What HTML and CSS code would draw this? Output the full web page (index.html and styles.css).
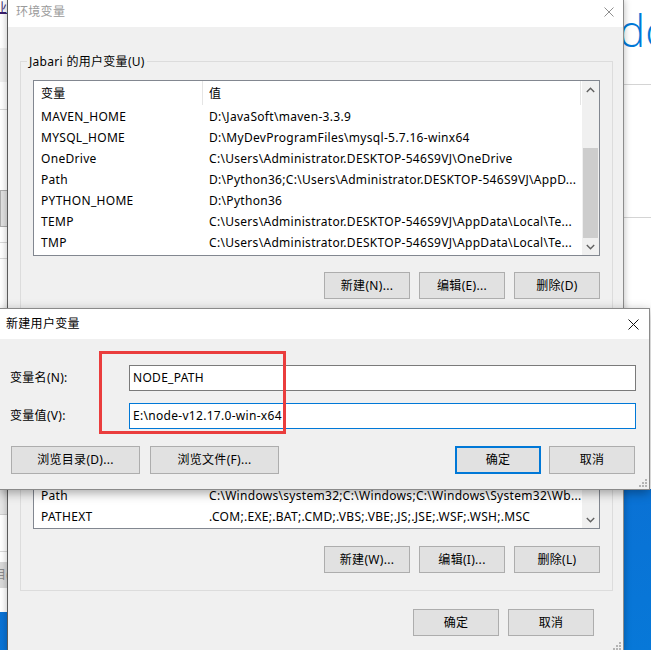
FILE: index.html
```html
<!DOCTYPE html>
<html lang="zh-CN">
<head>
<meta charset="utf-8">
<title>环境变量</title>
<link rel="stylesheet" href="styles.css">
</head>
<body>
<div class="desktop">
  <div class="wallpaper"></div>

  <div class="bg-left">
    <div class="bgl-link"><span>业</span></div>
    <div class="bgl-space h32"></div>
    <div class="bgl-band"></div>
    <div class="bgl-space h28 line"></div>
    <div class="bgl-space h79"></div>
    <div class="bgl-btn"></div>
    <div class="bgl-space h15 line"></div>
    <div class="bgl-space h16 line"></div>
    <div class="bgl-space h231"></div>
    <div class="bgl-gray"></div>
    <div class="bgl-space h37 line"></div>
    <div class="bgl-space h10"></div>
    <div class="bgl-tab"><span>目(</span></div>
  </div>

  <div class="bg-right">
    <div class="bgr-logo">do</div>
    <div class="bgr-block"></div>
  </div>

  <section class="dlg env">
    <header class="titlebar env-title">
      <span class="title">环境变量</span>
      <svg class="close" width="10" height="10" viewBox="0 0 10 10"><path d="M0.5 0.5L9.5 9.5M9.5 0.5L0.5 9.5"/></svg>
    </header>
    <div class="env-body">
      <fieldset class="group">
        <legend>Jabari 的用户变量(U)</legend>
        <div class="listview">
          <div class="lv-main">
            <div class="lv-head"><span class="hc1">变量</span><span class="hc2">值</span></div>
            <div class="lv-rows top">
              <div class="lv-row"><span class="c1">MAVEN_HOME</span><span class="c2">D:\JavaSoft\maven-3.3.9</span></div>
              <div class="lv-row"><span class="c1">MYSQL_HOME</span><span class="c2">D:\MyDevProgramFiles\mysql-5.7.16-winx64</span></div>
              <div class="lv-row"><span class="c1">OneDrive</span><span class="c2">C:\Users\Administrator.DESKTOP-546S9VJ\OneDrive</span></div>
              <div class="lv-row"><span class="c1">Path</span><span class="c2">D:\Python36;C:\Users\Administrator.DESKTOP-546S9VJ\AppD...</span></div>
              <div class="lv-row"><span class="c1">PYTHON_HOME</span><span class="c2">D:\Python36</span></div>
              <div class="lv-row"><span class="c1">TEMP</span><span class="c2">C:\Users\Administrator.DESKTOP-546S9VJ\AppData\Local\Te...</span></div>
              <div class="lv-row"><span class="c1">TMP</span><span class="c2">C:\Users\Administrator.DESKTOP-546S9VJ\AppData\Local\Te...</span></div>
            </div>
          </div>
          <div class="vscroll">
            <div class="sb-arrow"><svg width="9" height="6" viewBox="0 0 9 6"><path d="M0.8 5L4.5 1.3L8.2 5"/></svg></div>
            <div class="sb-track"><div class="sb-thumb user-thumb"></div></div>
            <div class="sb-arrow"><svg width="9" height="6" viewBox="0 0 9 6"><path d="M0.8 1L4.5 4.7L8.2 1"/></svg></div>
          </div>
        </div>
        <div class="btn-row">
          <button class="btn">新建(N)...</button>
          <button class="btn">编辑(E)...</button>
          <button class="btn">删除(D)</button>
        </div>
      </fieldset>

      <fieldset class="group sys">
        <legend>系统变量(S)</legend>
        <div class="listview sys-list">
          <div class="lv-main">
            <div class="lv-head"><span class="hc1">变量</span><span class="hc2">值</span></div>
            <div class="lv-rows bottom">
              <div class="lv-row"><span class="c1">NUMBER_OF_PROCESSORS</span><span class="c2">4</span></div>
              <div class="lv-row"><span class="c1">OS</span><span class="c2">Windows_NT</span></div>
              <div class="lv-row"><span class="c1">Path</span><span class="c2">C:\Windows\system32;C:\Windows;C:\Windows\System32\Wb...</span></div>
              <div class="lv-row"><span class="c1">PATHEXT</span><span class="c2">.COM;.EXE;.BAT;.CMD;.VBS;.VBE;.JS;.JSE;.WSF;.WSH;.MSC</span></div>
            </div>
          </div>
          <div class="vscroll">
            <div class="sb-arrow"><svg width="9" height="6" viewBox="0 0 9 6"><path d="M0.8 5L4.5 1.3L8.2 5"/></svg></div>
            <div class="sb-track"><div class="sb-thumb sys-thumb"></div></div>
            <div class="sb-arrow"><svg width="9" height="6" viewBox="0 0 9 6"><path d="M0.8 1L4.5 4.7L8.2 1"/></svg></div>
          </div>
        </div>
        <div class="btn-row">
          <button class="btn">新建(W)...</button>
          <button class="btn">编辑(I)...</button>
          <button class="btn">删除(L)</button>
        </div>
      </fieldset>

      <div class="dlg-btns">
        <button class="btn">确定</button>
        <button class="btn">取消</button>
      </div>
    </div>
    <svg class="grip" width="8" height="8" viewBox="0 0 8 8"><rect x="6" y="0" width="2" height="2"/><rect x="3" y="3" width="2" height="2"/><rect x="6" y="3" width="2" height="2"/><rect x="0" y="6" width="2" height="2"/><rect x="3" y="6" width="2" height="2"/><rect x="6" y="6" width="2" height="2"/></svg>
  </section>

  <section class="dlg newvar">
    <header class="titlebar new-title">
      <span class="title">新建用户变量</span>
      <svg class="close" width="11" height="11" viewBox="0 0 11 11"><path d="M0.5 0.5L10.5 10.5M10.5 0.5L0.5 10.5"/></svg>
    </header>
    <div class="new-body">
      <div class="field-row">
        <span class="label">变量名(N):</span>
        <div class="field">NODE_PATH</div>
      </div>
      <div class="field-row second">
        <span class="label">变量值(V):</span>
        <div class="field focus"><span>E:\node-v12.17.0-win-x64</span><span class="caret"></span></div>
      </div>
      <div class="new-btns">
        <div class="left-btns">
          <button class="btn wide">浏览目录(D)...</button>
          <button class="btn wide">浏览文件(F)...</button>
        </div>
        <div class="right-btns">
          <button class="btn default">确定</button>
          <button class="btn">取消</button>
        </div>
      </div>
    </div>
    <svg class="grip" width="8" height="8" viewBox="0 0 8 8"><rect x="6" y="0" width="2" height="2"/><rect x="3" y="3" width="2" height="2"/><rect x="6" y="3" width="2" height="2"/><rect x="0" y="6" width="2" height="2"/><rect x="3" y="6" width="2" height="2"/><rect x="6" y="6" width="2" height="2"/></svg>
  </section>

  <div class="annotation"></div>
</div>
</body>
</html>
```

FILE: styles.css
```css
* { box-sizing: border-box; }
html, body { margin: 0; padding: 0; }
body {
  width: 651px;
  height: 650px;
  overflow: hidden;
  font-family: "Noto Sans", "Noto Sans CJK SC", sans-serif;
  font-size: 12px;
  line-height: 16px;
  letter-spacing: 0.3px;
  color: #000;
  background: #fff;
}
.desktop {
  position: relative;
  width: 651px;
  height: 650px;
  overflow: hidden;
  background: #fff;
}

/* wallpaper */
.wallpaper {
  position: absolute;
  left: 0;
  top: 470px;
  width: 651px;
  height: 180px;
  background: linear-gradient(170deg, #0a5cc2 0%, #0d66cc 14%, #2a8ae6 22%, #0b70d4 30%, #0778d8 100%);
}

/* background window on the left */
.bg-left {
  position: absolute;
  left: 0;
  top: 0;
  width: 30px;
  height: 612px;
  background: #fff;
  display: flex;
  flex-direction: column;
}
.bgl-link { height: 16px; overflow: hidden; }
.bgl-link span {
  display: block;
  margin-left: -6px;
  font-size: 13px;
  line-height: 15px;
  color: #3b1f6e;
  text-decoration: underline;
}
.bgl-space { flex: none; }
.h10 { height: 10px; }
.h15 { height: 16px; }
.h16 { height: 16px; }
.h28 { height: 28px; }
.h32 { height: 32px; }
.h37 { height: 37px; }
.h79 { height: 80px; }
.h231 { height: 216px; }
.line { border-bottom: 1px solid #d9d9d9; }
.bgl-band { height: 34px; background: #f0f0f0; }
.bgl-btn { height: 37px; background: #e1e1e1; border: 1px solid #adadad; }
.bgl-gray { height: 40px; background: #e6e6e6; border-bottom: 1px solid #cfcfcf; }
.bgl-tab {
  height: 26px;
  background: #d9d9d9;
  color: #8a8a8a;
  overflow: hidden;
  line-height: 26px;
}
.bgl-tab span { display: block; margin-left: -6px; }

/* background window on the right */
.bg-right {
  position: absolute;
  left: 600px;
  top: 0;
  width: 51px;
  height: 489px;
  background: #fff;
}
.bgr-logo {
  height: 85px;
  border-bottom: 1px solid #d4d4d4;
  padding: 5px 0 0 19px;
  font-family: "Open Sans", "Noto Sans", sans-serif;
  font-weight: 300;
  font-size: 44px;
  line-height: 50px;
  letter-spacing: 0;
  color: #0078d7;
  white-space: nowrap;
  overflow: hidden;
}
.bgr-block { height: 133px; border-bottom: 1px solid #d4d4d4; }

/* dialogs */
.dlg { position: absolute; background: #f0f0f0; }
.titlebar {
  display: flex;
  justify-content: space-between;
  background: #fff;
}
.close path { stroke-width: 1; fill: none; }
.grip { position: absolute; right: 2px; bottom: 2px; }
.grip rect { fill: #b4b4b4; }

/* environment variables dialog */
.env {
  left: 7px;
  top: 0;
  width: 617px;
  height: 653px;
  border: 1px solid #8c8c8c;
  border-left-color: #5a5a5a;
  border-top: none;
  box-shadow: 0 0 7px rgba(0, 0, 0, 0.28);
  z-index: 2;
  display: flex;
  flex-direction: column;
}
.env-title {
  height: 27px;
  padding: 4px 9px 0 8px;
}
.env-title .title { color: #9a9a9a; line-height: 16px; }
.env-title .close { margin-top: 3px; }
.env-title .close path { stroke: #8f8f8f; }

.env-body { padding: 0 10px 0 12px; }

fieldset.group {
  margin: 26px 0 0 0;
  padding: 10px 12px 17px 12px;
  border: 1px solid #dcdcdc;
  min-width: 0;
}
fieldset.group legend {
  margin-left: -6px;
  padding: 0 2px;
  line-height: 17px;
}
fieldset.group.sys { margin-top: 8px; }

.listview {
  display: flex;
  height: 176px;
  border: 1px solid #828790;
  background: #fff;
}
.sys-list { height: 177px; }
.lv-main {
  flex: 1;
  min-width: 0;
  display: flex;
  flex-direction: column;
  overflow: hidden;
}
.lv-head {
  display: flex;
  height: 24px;
  flex: none;
  line-height: 26px;
}
.hc1 {
  width: 169px;
  padding-left: 7px;
  border-right: 1px solid #e5e5e5;
}
.hc2 {
  width: 378px;
  padding-left: 6px;
  border-right: 1px solid #e5e5e5;
}
.lv-rows { display: flex; flex-direction: column; flex: 1; min-height: 0; overflow: hidden; }
.lv-rows.top { padding-top: 1px; }
.lv-rows.bottom { justify-content: flex-end; padding-bottom: 1px; }
.lv-row {
  display: flex;
  flex: none;
  height: 21px;
  line-height: 22px;
  white-space: nowrap;
}
.c1 { width: 169px; padding-left: 7px; flex: none; overflow: hidden; }
.c2 { flex: 1; padding-left: 6px; overflow: hidden; }

.vscroll {
  width: 17px;
  flex: none;
  display: flex;
  flex-direction: column;
  background: #f0f0f0;
}
.sb-arrow {
  height: 17px;
  flex: none;
  display: flex;
  align-items: center;
  justify-content: center;
}
.sb-arrow path { fill: none; stroke: #606060; stroke-width: 1.4; }
.sb-track { flex: 1; }
.sb-thumb { background: #cdcdcd; margin: 0 1px; }
.user-thumb { margin-top: 50px; height: 90px; }
.sys-thumb { margin-top: 20px; height: 70px; }

.btn {
  height: 27px;
  width: 86px;
  padding: 0;
  margin: 0;
  background: #e1e1e1;
  border: 1px solid #adadad;
  font: inherit;
  letter-spacing: inherit;
  color: #000;
  display: flex;
  align-items: center;
  justify-content: center;
}
.btn-row {
  display: flex;
  justify-content: flex-end;
  gap: 9px;
  margin-top: 16px;
}
.sys .btn-row { margin-top: 17px; }
.dlg-btns {
  display: flex;
  justify-content: flex-end;
  gap: 9px;
  margin: 18px 19px 0 0;
}

/* new user variable dialog */
.newvar {
  left: -1px;
  top: 308px;
  width: 651px;
  height: 182px;
  border: 1px solid #8a8a8a;
  box-shadow: 0 3px 10px rgba(0, 0, 0, 0.35);
  z-index: 3;
}
.new-title {
  height: 30px;
  align-items: center;
  padding: 0 10px 0 6px;
}
.new-title .close path { stroke: #111; }
.new-body { padding: 0 13px 0 10px; }
.field-row {
  display: flex;
  align-items: center;
  margin-top: 26px;
}
.field-row.second { margin-top: 12px; }
.label { width: 119px; flex: none; }
.field {
  flex: 1;
  height: 26px;
  border: 1px solid #7a7a7a;
  background: #fff;
  padding-left: 3px;
  line-height: 24px;
  display: flex;
  align-items: center;
  white-space: nowrap;
}
.field.focus { border-color: #0078d7; }
.caret {
  width: 1px;
  height: 15px;
  background: #000;
  margin-left: 1px;
}
.new-btns {
  display: flex;
  justify-content: space-between;
  margin: 17px 1px 0 1px;
}
.left-btns, .right-btns { display: flex; }
.left-btns { gap: 10px; }
.right-btns { gap: 8px; }
.btn.wide { width: 129px; height: 28px; }
.right-btns .btn { height: 28px; }
.btn.default { border: 2px solid #0078d7; }

/* annotation */
.annotation {
  position: absolute;
  left: 99px;
  top: 351px;
  width: 187px;
  height: 83px;
  border: 3px solid #ea3d3d;
  z-index: 4;
}
```
